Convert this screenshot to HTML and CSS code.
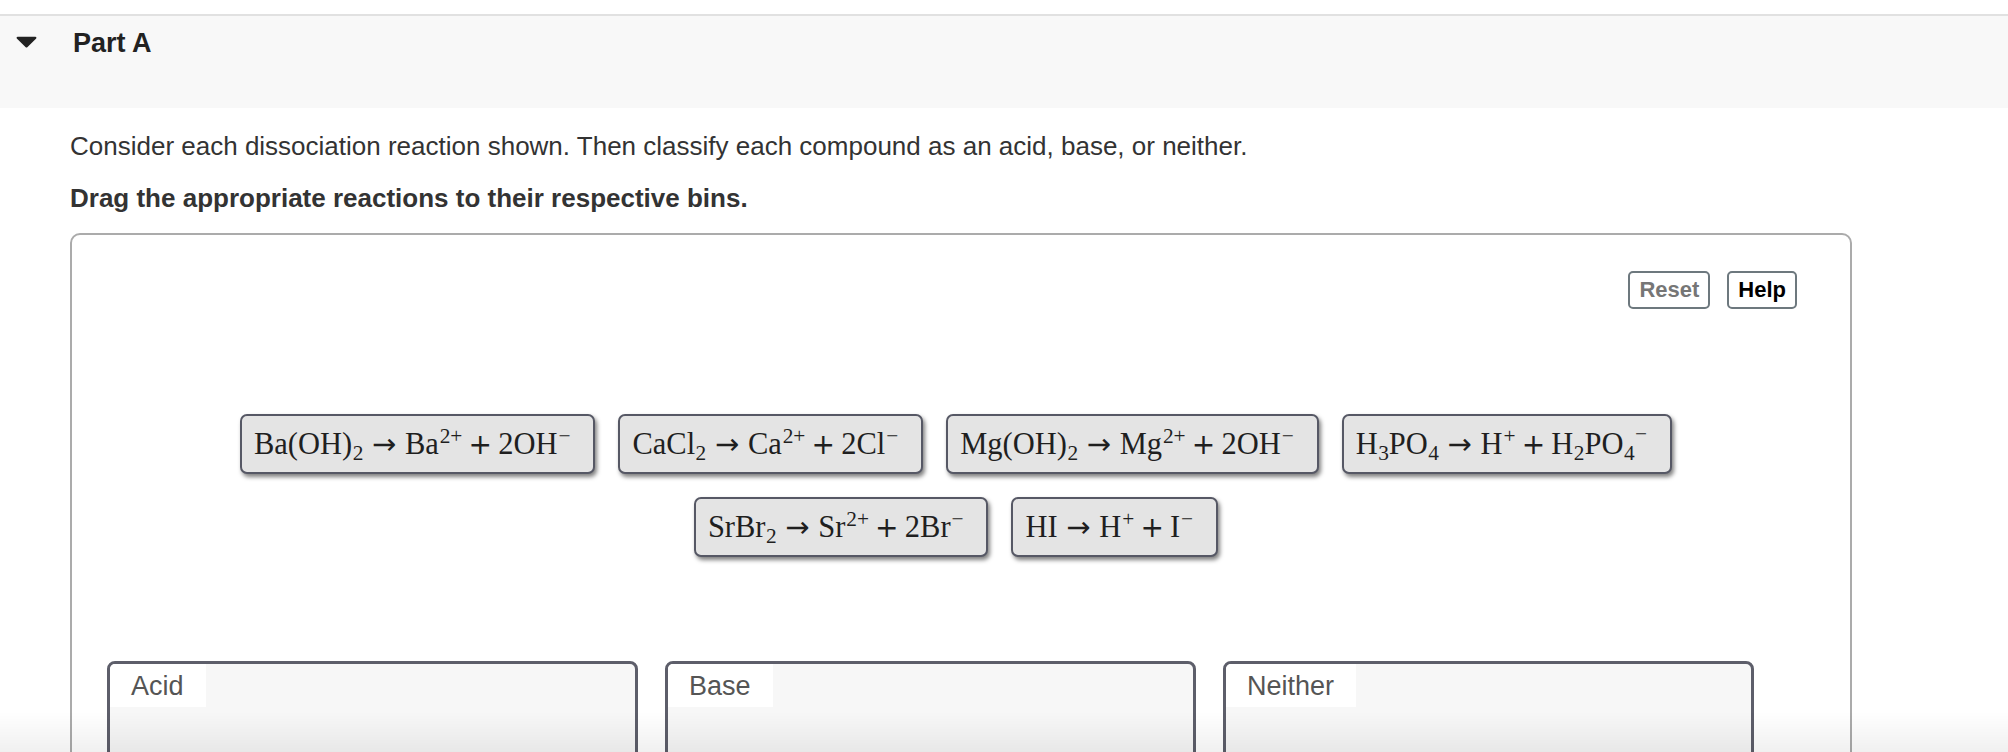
FILE: index.html
```html
<!DOCTYPE html>
<html lang="en">
<head>
<meta charset="utf-8">
<title>Part A</title>
<link rel="stylesheet" href="styles.css">
</head>
<body>
<div class="page-top"></div>
<section class="part">
  <header class="part-header">
    <svg class="caret" width="21" height="12" viewBox="0 0 21 12" aria-hidden="true"><path d="M1.6 0.8 H19.4 A1 1 0 0 1 20.2 2.4 L11.3 11.2 A1.1 1.1 0 0 1 9.7 11.2 L0.8 2.4 A1 1 0 0 1 1.6 0.8 Z" fill="#222"/></svg>
    <h2 class="part-title">Part A</h2>
  </header>
  <div class="part-body">
    <p class="prompt">Consider each dissociation reaction shown. Then classify each compound as an acid, base, or neither.</p>
    <p class="instr">Drag the appropriate reactions to their respective bins.</p>
    <div class="dnd">
      <div class="toolbar">
        <button class="btn btn-reset">Reset</button>
        <button class="btn btn-help">Help</button>
      </div>
      <div class="pool">
        <div class="pool-row">
          <div class="chip"><span class="m">Ba(OH)<sub>2</sub><span class="rel">→</span>Ba<sup>2+</sup><span class="bop">+</span>2OH<sup>−</sup></span></div>
          <div class="chip"><span class="m">CaCl<sub>2</sub><span class="rel">→</span>Ca<sup>2+</sup><span class="bop">+</span>2Cl<sup>−</sup></span></div>
          <div class="chip"><span class="m">Mg(OH)<sub>2</sub><span class="rel">→</span>Mg<sup>2+</sup><span class="bop">+</span>2OH<sup>−</sup></span></div>
          <div class="chip"><span class="m">H<sub>3</sub>PO<sub>4</sub><span class="rel">→</span>H<sup>+</sup><span class="bop">+</span>H<sub>2</sub>PO<sub>4</sub><sup class="tight">−</sup></span></div>
        </div>
        <div class="pool-row">
          <div class="chip"><span class="m">SrBr<sub>2</sub><span class="rel">→</span>Sr<sup>2+</sup><span class="bop">+</span>2Br<sup>−</sup></span></div>
          <div class="chip"><span class="m">HI<span class="rel">→</span>H<sup>+</sup><span class="bop">+</span>I<sup>−</sup></span></div>
        </div>
      </div>
      <div class="bins">
        <div class="bin"><div class="bin-label">Acid</div></div>
        <div class="bin"><div class="bin-label">Base</div></div>
        <div class="bin"><div class="bin-label">Neither</div></div>
      </div>
    </div>
  </div>
</section>
<div class="fade"></div>
</body>
</html>
```
FILE: styles.css
```css
* { box-sizing: border-box; }
html, body { margin: 0; padding: 0; background: #fff; }
body {
  font-family: "Liberation Sans", Arial, Helvetica, sans-serif;
  color: #333;
  height: 752px;
  overflow: hidden;
}
.page-top { height: 14px; }

.part-header {
  border-top: 2px solid #e1e1e1;
  background: #f8f8f8;
  height: 94px;
  display: flex;
  align-items: flex-start;
  padding: 11px 0 0 16px;
}
.caret { margin-top: 9px; flex: none; }
.part-title {
  margin: 0 0 0 36px;
  font-size: 27px;
  line-height: 32px;
  font-weight: bold;
  color: #222;
}

.part-body { padding: 22px 156px 0 70px; }
.prompt {
  margin: 0;
  font-size: 26px;
  line-height: 32px;
  color: #333;
}
.instr {
  margin: 20px 0 0;
  font-size: 26px;
  line-height: 32px;
  font-weight: bold;
  color: #333;
}

.dnd {
  margin-top: 19px;
  border: 2px solid #ababab;
  border-radius: 10px;
  height: 620px;
  padding-top: 36px;
}
.toolbar {
  display: flex;
  justify-content: flex-end;
  gap: 17px;
  padding-right: 53px;
}
.btn {
  height: 38px;
  padding: 0 9px;
  border: 2px solid #6d787e;
  border-radius: 5px;
  background: #fff;
  font-family: "Liberation Sans", Arial, sans-serif;
  font-size: 22px;
  font-weight: bold;
  line-height: 34px;
}
.btn-reset { color: #767676; }
.btn-help { color: #000; }

.pool {
  margin-top: 105px;
  padding-right: 10px;
  display: flex;
  flex-direction: column;
  gap: 23px;
}
.pool-row {
  display: flex;
  justify-content: center;
  gap: 23px;
}
.chip {
  height: 60px;
  display: flex;
  align-items: center;
  padding: 0 23px 0 12px;
  border: 2px solid #565865;
  border-radius: 7px;
  background: #e4e4e4;
  box-shadow: 2px 3px 4px rgba(0, 0, 0, 0.5);
  font-family: "Liberation Serif", "Times New Roman", serif;
  font-size: 30.5px;
  color: #1f1f1f;
  white-space: nowrap;
}
.m { line-height: 1; }
.m sub, .m sup { font-size: 0.7em; line-height: 0; position: relative; vertical-align: baseline; }
.m sub { top: 0.3em; margin-left: 0.02em; }
.m sup { top: -0.5em; margin-left: 0.04em; }
.m sup.tight { margin-left: 0.02em; top: -0.6em; }
.rel {
  font-family: "DejaVu Sans", sans-serif;
  font-size: 0.95em;
  margin: 0 0.3em;
}
.bop {
  font-family: "DejaVu Sans", sans-serif;
  font-size: 0.92em;
  margin: 0 0.22em;
}

.bins {
  margin-top: 104px;
  padding-left: 35px;
  display: flex;
  gap: 27px;
}
.bin {
  width: 531px;
  height: 200px;
  border: 3px solid #5d5e6a;
  border-radius: 8px;
  background: #f7f7f7;
}
.bin-label {
  display: inline-block;
  background: #fff;
  font-size: 27px;
  line-height: 41px;
  padding: 2px 22px 0 21px;
  color: #555;
  border-top-left-radius: 5px;
}

.fade {
  position: fixed;
  left: 0;
  right: 0;
  bottom: 0;
  height: 40px;
  background: linear-gradient(rgba(0, 0, 0, 0), rgba(0, 0, 0, 0.06));
  pointer-events: none;
}
```
